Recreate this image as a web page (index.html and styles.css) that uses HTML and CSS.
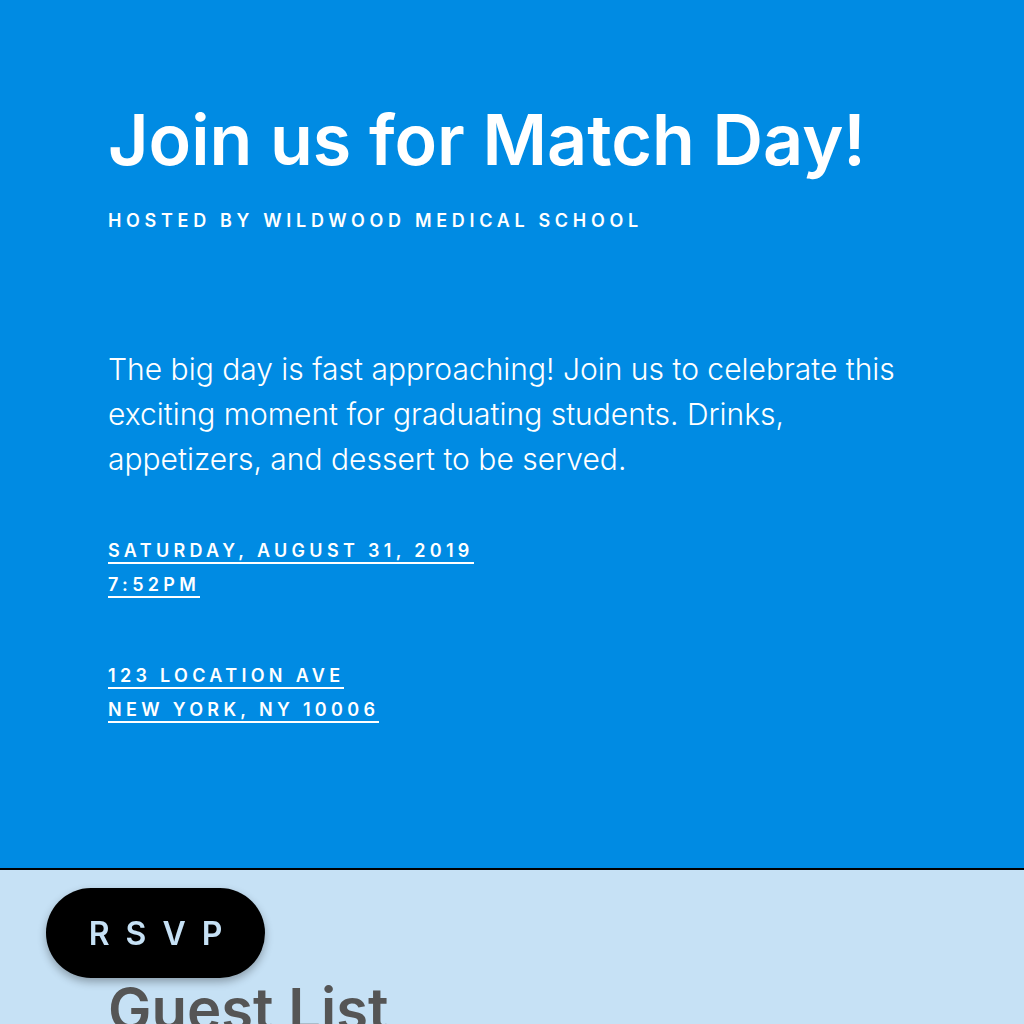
FILE: index.html
```html
<!DOCTYPE html>
<html lang="en">
  <head>
    <title>Match Day</title>
    <meta charset="utf-8">
    <meta name="viewport" content="width=device-width, initial-scale=1.0">
    <link rel="stylesheet" href="styles.css">
  </head>
  <body>
    <header class="hero">
      <h1 class="hero-title">Join us for Match Day!</h1>
      <p class="hero-host">Hosted by Wildwood Medical School</p>

      <p class="hero-text">The big day is fast approaching! Join us to celebrate this exciting moment for graduating students. Drinks, appetizers, and dessert to be served.</p>

      <div class="detail">
        <a class="detail-link" href="#">Saturday, August 31, 2019</a>
        <a class="detail-link" href="#">7:52PM</a>
      </div>

      <div class="detail">
        <a class="detail-link" href="#">123 Location Ave</a>
        <a class="detail-link" href="#">New York, NY 10006</a>
      </div>
    </header>

    <section class="guests">
      <h2 class="guests-title">Guest List</h2>
    </section>

    <a class="rsvp" href="#">RSVP</a>
  </body>
</html>
```

FILE: styles.css
```css
body {
  margin: 0;
  font-family: "Inter", "Liberation Sans", sans-serif;
  background-color: #c6e1f5;
}

.hero {
  background-color: #008be3;
  color: #fff;
  padding: 96px 108px 0;
  height: 772px;
  border-bottom: 2px solid #000;
}

.hero-title {
  margin: 0;
  font-size: 70px;
  font-weight: 600;
  line-height: 88px;
}

.hero-host {
  margin: 26px 0 0;
  font-size: 18px;
  font-weight: 600;
  letter-spacing: 0.26em;
  text-transform: uppercase;
}

.hero-text {
  margin: 116px 0 0;
  max-width: 810px;
  font-size: 30px;
  font-weight: 300;
  line-height: 45px;
}

.detail {
  display: flex;
  flex-direction: column;
  align-items: flex-start;
  gap: 10px;
  margin-top: 58px;
}

.detail + .detail {
  margin-top: 67px;
}

.detail-link {
  color: #fff;
  text-decoration: none;
  font-size: 18px;
  font-weight: 600;
  letter-spacing: 0.24em;
  text-transform: uppercase;
  line-height: 22px;
  border-bottom: 2px solid #fff;
}

.guests {
  padding: 104px 108px 40px;
}

.guests-title {
  margin: 0;
  font-size: 58px;
  font-weight: 600;
  color: #555;
}

.rsvp {
  position: fixed;
  left: 46px;
  top: 888px;
  width: 219px;
  height: 90px;
  display: flex;
  align-items: center;
  justify-content: center;
  border-radius: 45px;
  background-color: #000;
  color: #c6e1f5;
  text-decoration: none;
  font-size: 32px;
  font-weight: 600;
  letter-spacing: 0.5em;
  text-indent: 0.5em;
  box-shadow: 0 4px 8px rgba(0, 0, 0, 0.3);
}
```
